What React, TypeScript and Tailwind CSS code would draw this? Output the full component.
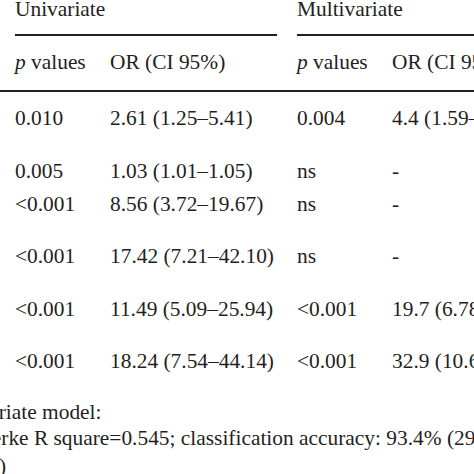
const rows = [
  { mt: "mt-[14px]", a: "0.010", b: "2.61 (1.25–5.41)", c: "0.004", d: "4.4 (1.59–12.18)" },
  { mt: "mt-[29px]", a: "0.005", b: "1.03 (1.01–1.05)", c: "ns", d: "-" },
  { mt: "mt-[9px]", a: "<0.001", b: "8.56 (3.72–19.67)", c: "ns", d: "-" },
  { mt: "mt-[28px]", a: "<0.001", b: "17.42 (7.21–42.10)", c: "ns", d: "-" },
  { mt: "mt-[29px]", a: "<0.001", b: "11.49 (5.09–25.94)", c: "<0.001", d: "19.7 (6.78–57.21)" },
  { mt: "mt-[28px]", a: "<0.001", b: "18.24 (7.54–44.14)", c: "<0.001", d: "32.9 (10.65–101.6)" },
];

const Cols = "grid grid-cols-[95px_187px_95px_300px] pl-[15px]";

export default function App() {
  return (
    <div
      className="w-[474px] h-[474px] overflow-hidden bg-white text-[#231f20] text-[21.4px] leading-[24px] whitespace-nowrap"
      style={{ fontFamily: '"Liberation Serif", "Times New Roman", serif' }}
    >
      {/* group headings */}
      <div className={`${Cols} -mt-[3px]`}>
        <div className="col-span-2">Univariate</div>
        <div className="col-span-2">Multivariate</div>
      </div>
      <div className={`${Cols} mt-[13px]`}>
        <div className="col-span-2 pr-[20px]">
          <div className="h-[1.5px] bg-[#231f20]" />
        </div>
        <div className="col-span-2">
          <div className="h-[1.5px] bg-[#231f20]" />
        </div>
      </div>

      {/* column headings */}
      <div className={`${Cols} mt-[14px]`}>
        <div>
          <span className="italic">p</span> values
        </div>
        <div>OR (CI 95%)</div>
        <div>
          <span className="italic">p</span> values
        </div>
        <div>OR (CI 95%)</div>
      </div>
      <div className="mt-[16px] h-[2px] bg-[#231f20]" />

      {rows.map((r, i) => (
        <div key={i} className={`${Cols} ${r.mt}`}>
          <div>{r.a}</div>
          <div>{r.b}</div>
          <div>{r.c}</div>
          <div>{r.d}</div>
        </div>
      ))}

      {/* footnote */}
      <div className="mt-[26px] leading-[26px]">
        <div className="-ml-[69px]">Multivariate model:</div>
        <div className="-ml-[70px]">
          Nagelkerke R square=0.545; classification accuracy: 93.4% (296/317
        </div>
        <div className="-ml-[1px] mt-[2px]">)</div>
      </div>
    </div>
  );
}
